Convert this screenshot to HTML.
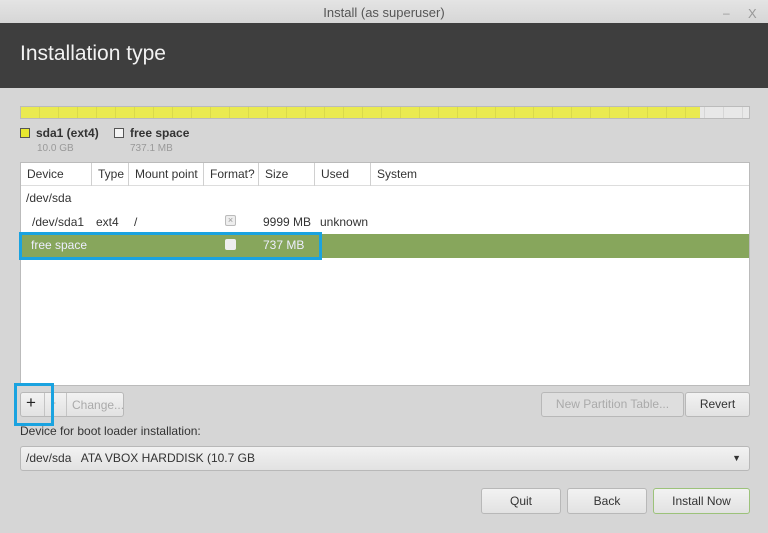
<!DOCTYPE html><html><head><style>
*{box-sizing:border-box;margin:0;padding:0}
body{width:768px;height:533px;background:#d6d6d6;font-family:"Liberation Sans",sans-serif;font-size:12px;color:#333;position:relative;overflow:hidden}
.a{position:absolute}
.btn{position:absolute;background:linear-gradient(#f2f2f2,#e2e2e2);border:1px solid #b8b8b8;border-radius:3px;text-align:center;color:#333;font-size:12px}
.th{position:absolute;top:0;height:23px;line-height:23px;border-right:1px solid #d0d0d0;padding-left:6px}
</style></head><body>
<div class="a" style="left:0;top:0;width:768px;height:24px;background:linear-gradient(#e4e4e4,#d6d6d6);border-bottom:1px solid #bbb;text-align:center;line-height:26px;font-size:13px;color:#555">Install (as superuser)</div>
<div class="a" style="left:723px;top:6px;color:#999;font-size:12px">–</div>
<div class="a" style="left:748px;top:6px;color:#999;font-size:13px">X</div>
<div class="a" style="left:0;top:23px;width:768px;height:65px;background:#3e3e3e"></div>
<div class="a" style="left:20px;top:42px;color:#f2f2f2;font-size:21px">Installation type</div>
<div class="a" style="left:20px;top:106px;width:730px;height:13px;background:#e8e8e8;border:1px solid #bbb;background-image:repeating-linear-gradient(90deg,transparent 0 18px,rgba(0,0,0,.08) 18px 19px)"></div>
<div class="a" style="left:21px;top:107px;width:679px;height:11px;background:#eaea50;background-image:repeating-linear-gradient(90deg,transparent 0 18px,rgba(0,0,0,.07) 18px 19px)"></div>
<div class="a" style="left:20px;top:128px;width:10px;height:10px;background:#e8e830;border:1px solid #555"></div>
<div class="a" style="left:36px;top:126px;font-weight:bold;font-size:12px">sda1 (ext4)</div>
<div class="a" style="left:37px;top:143px;color:#999;font-size:10px">10.0 GB</div>
<div class="a" style="left:114px;top:128px;width:10px;height:10px;background:#f4f4f4;border:1px solid #555"></div>
<div class="a" style="left:130px;top:126px;font-weight:bold;font-size:12px">free space</div>
<div class="a" style="left:130px;top:143px;color:#999;font-size:10px">737.1 MB</div>
<div class="a" style="left:20px;top:162px;width:730px;height:224px;background:#fff;border:1px solid #bbb">
<div class="a" style="left:0;top:0;width:728px;height:23px;border-bottom:1px solid #ddd">
<div class="th" style="left:0;width:71px">Device</div><div class="th" style="left:71px;width:37px">Type</div><div class="th" style="left:108px;width:75px">Mount point</div><div class="th" style="left:183px;width:55px">Format?</div><div class="th" style="left:238px;width:56px">Size</div><div class="th" style="left:294px;width:56px">Used</div><div class="th" style="left:350px;width:378px;border:0">System</div></div>
<div class="a" style="left:5px;top:28px">/dev/sda</div>
<div class="a" style="left:11px;top:52px">/dev/sda1</div><div class="a" style="left:75px;top:52px">ext4</div><div class="a" style="left:113px;top:52px">/</div>
<div class="a" style="left:204px;top:52px;width:11px;height:11px;border:1px solid #bbb;border-radius:2px;background:#eee;font-size:9px;line-height:9px;text-align:center;color:#999">×</div>
<div class="a" style="left:242px;top:52px">9999 MB</div><div class="a" style="left:299px;top:52px">unknown</div>
<div class="a" style="left:0;top:71px;width:728px;height:24px;background:#87a65c"></div>
<div class="a" style="left:10px;top:75px;color:#eef">free space</div>
<div class="a" style="left:204px;top:76px;width:11px;height:11px;border-radius:2px;background:#eee"></div>
<div class="a" style="left:242px;top:75px;color:#eef">737 MB</div>
</div>
<div class="a" style="left:19px;top:232px;width:303px;height:28px;border:3px solid #1aa3e0"></div>
<div class="btn" style="left:20px;top:392px;width:104px;height:25px"></div>
<div class="a" style="left:26px;top:393px;font-size:17px;color:#222">+</div>
<div class="a" style="left:44px;top:393px;width:1px;height:23px;background:#c4c4c4"></div>
<div class="a" style="left:52px;top:395px;color:#aaa">-</div>
<div class="a" style="left:66px;top:393px;width:1px;height:23px;background:#c4c4c4"></div>
<div class="a" style="left:72px;top:398px;color:#aaa">Change...</div>
<div class="a" style="left:14px;top:383px;width:40px;height:43px;border:3px solid #1aa3e0"></div>
<div class="btn" style="left:541px;top:392px;width:143px;height:25px;line-height:23px;color:#aaa;background:#dedede">New Partition Table...</div>
<div class="btn" style="left:685px;top:392px;width:65px;height:25px;line-height:23px">Revert</div>
<div class="a" style="left:20px;top:424px">Device for boot loader installation:</div>
<div class="btn" style="left:20px;top:446px;width:730px;height:25px;text-align:left;padding-left:5px;line-height:23px">/dev/sda &nbsp; ATA VBOX HARDDISK (10.7 GB<span style="position:absolute;right:8px;font-size:9px">▼</span></div>
<div class="btn" style="left:481px;top:488px;width:80px;height:26px;line-height:24px">Quit</div>
<div class="btn" style="left:567px;top:488px;width:80px;height:26px;line-height:24px">Back</div>
<div class="btn" style="left:653px;top:488px;width:97px;height:26px;line-height:24px;border-color:#9cc27a">Install Now</div>
</body></html>
